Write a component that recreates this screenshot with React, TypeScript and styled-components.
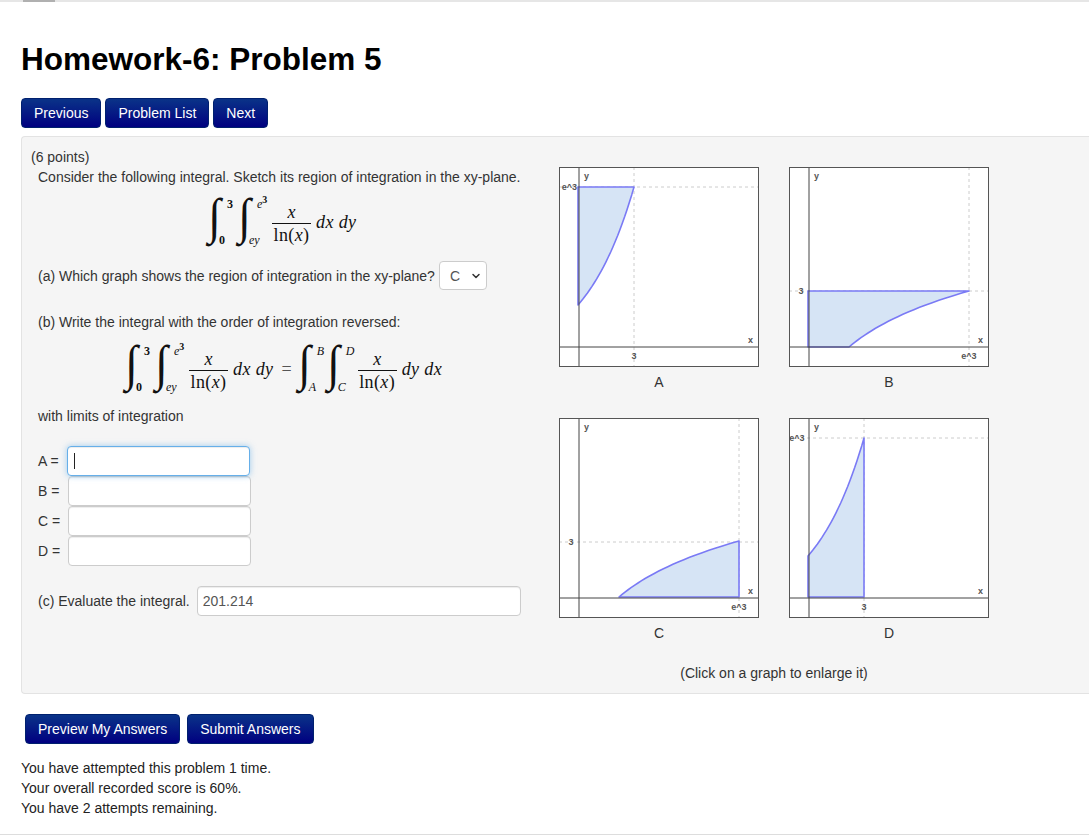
import React, { FC, ReactNode } from 'react'
import styled, { createGlobalStyle } from 'styled-components'
import { ChevronDown } from 'lucide-react'

const GlobalStyle = createGlobalStyle`
  html, body {
    margin: 0;
    padding: 0;
    background: #fff;
    overflow: hidden;
  }
  body {
    font-family: "Liberation Sans", Arial, sans-serif;
    font-size: 14px;
    line-height: 20px;
    color: #333;
  }
`

const Page = styled.div`
  height: 835px;
  display: flex;
  flex-direction: column;
`

const TopRule = styled.div`
  height: 2px;
  display: flex;
  background: #e6e6e6;
  padding-left: 23px;
`

const TopTab = styled.div`
  width: 32px;
  background: #b0b0b0;
`

const Title = styled.h1`
  margin: 37px 0 0 21px;
  font-size: 31.5px;
  line-height: 40px;
  font-weight: 700;
  color: #000;
`

const Nav = styled.nav`
  display: flex;
  gap: 4px;
  margin: 19px 0 0 21px;
`

const Actions = styled.div`
  display: flex;
  gap: 7px;
  margin: 20px 0 0 25px;
`

const Button = styled.button`
  height: 30px;
  padding: 0 12px;
  border: 1px solid #00206e;
  border-radius: 4px;
  background: linear-gradient(to bottom, #0a3388, #000080);
  color: #fff;
  font-family: inherit;
  font-size: 14px;
  line-height: 20px;
`

const Panel = styled.section`
  display: grid;
  grid-template-columns: 528px 430px;
  margin: 8px 0 0 21px;
  padding: 10px 0 10px 9px;
  background: #f5f5f5;
  border: 1px solid #e3e3e3;
  border-right: 0;
  border-radius: 4px 0 0 4px;
`

const Problem = styled.div`
  display: flex;
  flex-direction: column;
`

const Line = styled.div<{ $indent?: boolean; $top?: number }>`
  margin-left: ${p => (p.$indent ? 7 : 0)}px;
  margin-top: ${p => p.$top ?? 0}px;
  white-space: nowrap;
`

const Inline = styled.div<{ $top?: number; $gap?: number }>`
  display: flex;
  align-items: center;
  gap: ${p => p.$gap ?? 4}px;
  margin: ${p => p.$top ?? 0}px 0 0 7px;
`

const SelectBox = styled.div`
  position: relative;
  width: 48px;
  height: 29px;
`

const Select = styled.select`
  width: 100%;
  height: 100%;
  appearance: none;
  padding: 0 0 0 10px;
  background: #fff;
  border: 1px solid #ccc;
  border-radius: 4px;
  color: #555;
  font-family: inherit;
  font-size: 14px;
`

const SelectArrow = styled(ChevronDown)`
  position: absolute;
  right: 5px;
  top: 9px;
  color: #333;
  pointer-events: none;
`

const Limits = styled.div`
  display: flex;
  flex-direction: column;
  margin: 20px 0 0 7px;
`

const LimitRow = styled.label`
  display: flex;
  align-items: center;
  height: 30px;
  gap: 6px;
`

const LimitName = styled.span`
  width: 24px;
`

const FieldBox = styled.div`
  position: relative;
  margin-left: -1px;
`

const Field = styled.input<{ $wide?: boolean; $focus?: boolean }>`
  display: block;
  box-sizing: border-box;
  width: ${p => (p.$wide ? 324 : 183)}px;
  height: 30px;
  padding: 4px 5px;
  background: #fff;
  border: 1px solid ${p => (p.$focus ? '#66afe9' : '#ccc')};
  border-radius: 4px;
  box-shadow: ${p =>
    p.$focus
      ? 'inset 0 1px 1px rgba(0,0,0,.075), 0 0 6px rgba(102,175,233,.6)'
      : 'inset 0 1px 1px rgba(0,0,0,.075)'};
  color: #555;
  font-family: inherit;
  font-size: 14px;
  outline: none;
`

const Caret = styled.span`
  position: absolute;
  left: 7px;
  top: 7px;
  width: 1px;
  height: 16px;
  background: #222;
`

/* formulas */
const MathBlock = styled.div<{ $left: number; $top: number }>`
  display: flex;
  align-items: center;
  height: 68px;
  margin: ${p => p.$top}px 0 0 ${p => p.$left}px;
  font-family: "Liberation Serif", "Times New Roman", serif;
  color: #111;
  font-size: 18px;
`

const IntegralBox = styled.span<{ $width: number }>`
  display: inline-flex;
  align-items: stretch;
  width: ${p => p.$width}px;
  flex: none;
`

const IntegralSign = styled.span`
  display: block;
  flex: none;
  width: 14px;
  height: 56px;
  font-size: 40px;
  line-height: 44px;
  font-weight: 400;
  text-align: left;
  transform: scale(1.15, 1.25);
  transform-origin: left center;
`

const IntegralLimits = styled.span`
  display: flex;
  flex-direction: column;
  justify-content: space-between;
  font-size: 12px;
  line-height: 13px;
  height: 56px;
  white-space: nowrap;
`

const Upper = styled.span`
  font-weight: 700;
  margin: 2px 0 0 5px;
`

const Lower = styled.span`
  font-weight: 700;
  margin: 0 0 5px -3px;
`

const Var = styled.i`
  font-weight: 400;
`

const Sup = styled.sup`
  font-size: 10px;
  line-height: 0;
  font-style: normal;
  font-weight: 700;
`

const Fraction = styled.span`
  display: inline-flex;
  flex: none;
  flex-direction: column;
  align-items: center;
  width: 39px;
  margin-right: 5px;
`

const Numerator = styled.span`
  line-height: 21px;
  border-bottom: 1px solid #111;
  width: 100%;
  text-align: center;
`

const Denominator = styled.span`
  line-height: 22px;
  white-space: nowrap;
  letter-spacing: 0.4px;
`

const Differential = styled.i`
  white-space: pre;
  letter-spacing: 0.4px;
  margin-top: -4px;
`

const Equals = styled.span`
  margin: -4px 6px 0 8px;
  color: #555;
`

/* graphs */
const GraphPanel = styled.div`
  padding-top: 20px;
  display: flex;
  flex-direction: column;
`

const GraphGrid = styled.div`
  display: grid;
  grid-template-columns: 200px 200px;
  column-gap: 30px;
  row-gap: 26px;
`

const GraphCard = styled.figure`
  margin: 0;
  display: flex;
  flex-direction: column;
  align-items: center;
  gap: 5px;
`

const GraphSvg = styled.svg`
  display: block;
  width: 200px;
  height: 200px;
  background: #fff;
`

const GraphTick = styled.text`
  font-family: "Liberation Sans", Arial, sans-serif;
  font-size: 9px;
  font-weight: 700;
  fill: #555;
`

const Caption = styled.p`
  margin: 20px 0 0;
  text-align: center;
  width: 430px;
`

const Attempts = styled.div`
  margin: 14px 0 0 21px;
  color: #222;
`

const BottomRule = styled.div`
  margin-top: auto;
  height: 1px;
  background: #ddd;
`

type Tick = { x: number; y: number; label: string; anchor?: 'middle' | 'end' | 'start' }

type GraphProps = {
  name: string
  region: string
  dashX: number
  dashY: number
  ticks: Tick[]
}

const K = 1.1
const grow = (t: number) => (Math.exp(K * t) - 1) / (Math.exp(K) - 1)
const samples = Array.from({ length: 25 }, (_, i) => i / 24)
const curve = (fn: (t: number) => [number, number]) =>
  samples.map(t => fn(t).map(v => v.toFixed(1)).join(' ')).join(' L')

const regionA = `M19 20 L75 20 L${curve(t => [75 - 56 * t, 20 + 118 * (1 - grow(1 - t))])} Z`
const regionB = `M19 124 L180 124 L${curve(t => [60 + 120 * grow(1 - t), 124 + 56 * t])} L19 180 Z`
const regionC = `M60 179 L${curve(t => [60 + 120 * grow(t), 179 - 56 * t])} L180 179 Z`
const regionD = `M19 179 L19 138 L${curve(t => [19 + 56 * t, 138 - 118 * grow(t)])} L75 179 Z`

const Graph: FC<GraphProps> = ({ name, region, dashX, dashY, ticks }) => (
  <GraphCard>
    <GraphSvg viewBox="0 0 200 200">
      <line x1={dashX} y1={0} x2={dashX} y2={200} stroke="#ccc" strokeDasharray="3 3" />
      <line x1={0} y1={dashY} x2={200} y2={dashY} stroke="#ccc" strokeDasharray="3 3" />
      <path d={region} fill="#d6e4f5" stroke="#7a7af5" strokeWidth={1.6} strokeLinejoin="round" />
      <line x1={20} y1={0} x2={20} y2={200} stroke="#444" />
      <line x1={0} y1={180} x2={200} y2={180} stroke="#444" />
      <rect x={0.5} y={0.5} width={199} height={199} fill="none" stroke="#555" />
      <GraphTick x={25} y={12}>y</GraphTick>
      <GraphTick x={189} y={176}>x</GraphTick>
      {ticks.map(t => (
        <GraphTick key={t.label} x={t.x} y={t.y} textAnchor={t.anchor ?? 'middle'}>
          {t.label}
        </GraphTick>
      ))}
    </GraphSvg>
    <figcaption>{name}</figcaption>
  </GraphCard>
)

const Integral: FC<{ upper: ReactNode; lower: ReactNode; width: number }> = ({ upper, lower, width }) => (
  <IntegralBox $width={width}>
    <IntegralSign>∫</IntegralSign>
    <IntegralLimits>
      <Upper>{upper}</Upper>
      <Lower>{lower}</Lower>
    </IntegralLimits>
  </IntegralBox>
)

const Integrand: FC = () => (
  <Fraction>
    <Numerator><Var>x</Var></Numerator>
    <Denominator>ln(<Var>x</Var>)</Denominator>
  </Fraction>
)

const OuterLimits: FC = () => (
  <>
    <Integral width={30} upper="3" lower="0" />
    <Integral width={34} upper={<Var>e<Sup>3</Sup></Var>} lower={<Var>ey</Var>} />
    <Integrand />
  </>
)

const App: FC = () => {
  return (
    <Page>
      <GlobalStyle />
      <TopRule><TopTab /></TopRule>
      <Title>Homework-6: Problem 5</Title>
      <Nav>
        <Button>Previous</Button>
        <Button>Problem List</Button>
        <Button>Next</Button>
      </Nav>
      <Panel>
        <Problem>
          <Line>(6 points)</Line>
          <Line $indent>Consider the following integral. Sketch its region of integration in the xy-plane.</Line>
          <MathBlock $left={177} $top={3}>
            <OuterLimits />
            <Differential>dx dy</Differential>
          </MathBlock>
          <Inline $top={3}>
            <span>(a) Which graph shows the region of integration in the xy-plane?</span>
            <SelectBox>
              <Select defaultValue="C">
                <option>A</option>
                <option>B</option>
                <option>C</option>
                <option>D</option>
              </Select>
              <SelectArrow size={12} strokeWidth={3} />
            </SelectBox>
          </Inline>
          <Line $indent $top={22}>(b) Write the integral with the order of integration reversed:</Line>
          <MathBlock $left={94} $top={5}>
            <OuterLimits />
            <Differential>dx dy</Differential>
            <Equals>=</Equals>
            <Integral width={29} upper={<Var>B</Var>} lower={<Var>A</Var>} />
            <Integral width={31} upper={<Var>D</Var>} lower={<Var>C</Var>} />
            <Integrand />
            <Differential>dy dx</Differential>
          </MathBlock>
          <Line $indent $top={1}>with limits of integration</Line>
          <Limits>
            <LimitRow>
              <LimitName>A =</LimitName>
              <FieldBox>
                <Field $focus readOnly />
                <Caret />
              </FieldBox>
            </LimitRow>
            <LimitRow>
              <LimitName>B =</LimitName>
              <Field readOnly />
            </LimitRow>
            <LimitRow>
              <LimitName>C =</LimitName>
              <Field readOnly />
            </LimitRow>
            <LimitRow>
              <LimitName>D =</LimitName>
              <Field readOnly />
            </LimitRow>
          </Limits>
          <Inline $top={20} $gap={7}>
            <span>(c) Evaluate the integral.</span>
            <Field $wide readOnly defaultValue="201.214" />
          </Inline>
        </Problem>
        <GraphPanel>
          <GraphGrid>
            <Graph
              name="A"
              region={regionA}
              dashX={75}
              dashY={20}
              ticks={[
                { x: 18, y: 23, label: 'e^3', anchor: 'end' },
                { x: 75, y: 192, label: '3' },
              ]}
            />
            <Graph
              name="B"
              region={regionB}
              dashX={180}
              dashY={124}
              ticks={[
                { x: 12, y: 127, label: '3' },
                { x: 180, y: 192, label: 'e^3' },
              ]}
            />
            <Graph
              name="C"
              region={regionC}
              dashX={180}
              dashY={124}
              ticks={[
                { x: 12, y: 127, label: '3' },
                { x: 180, y: 192, label: 'e^3' },
              ]}
            />
            <Graph
              name="D"
              region={regionD}
              dashX={75}
              dashY={20}
              ticks={[
                { x: 8, y: 23, label: 'e^3', anchor: 'middle' },
                { x: 75, y: 192, label: '3' },
              ]}
            />
          </GraphGrid>
          <Caption>(Click on a graph to enlarge it)</Caption>
        </GraphPanel>
      </Panel>
      <Actions>
        <Button>Preview My Answers</Button>
        <Button>Submit Answers</Button>
      </Actions>
      <Attempts>
        You have attempted this problem 1 time.<br />
        Your overall recorded score is 60%.<br />
        You have 2 attempts remaining.
      </Attempts>
      <BottomRule />
    </Page>
  )
}

export default App
